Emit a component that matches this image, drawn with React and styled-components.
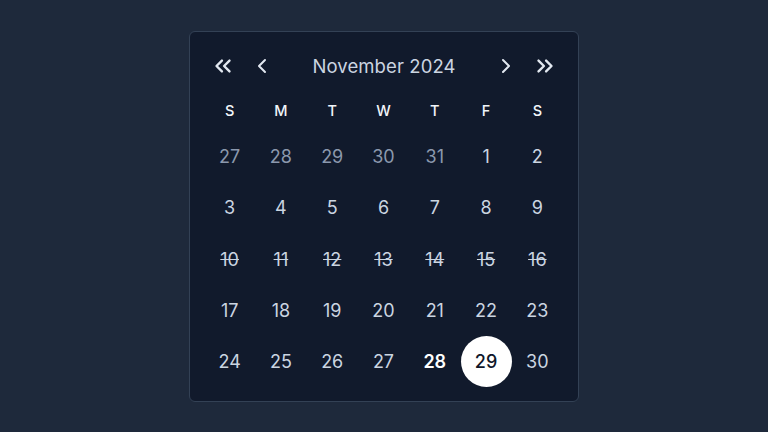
import React, { useState } from "react";
import styled, { createGlobalStyle } from "styled-components";
import { ChevronLeft, ChevronRight, ChevronsLeft, ChevronsRight } from "lucide-react";

const GlobalStyle = createGlobalStyle`
  html, body {
    margin: 0;
    padding: 0;
    background: #1e293b;
    font-family: Inter, "Liberation Sans", sans-serif;
  }
  #root {
    min-height: 100vh;
  }
`;

const WEEKDAYS = ["S", "M", "T", "W", "T", "F", "S"];

// November 2024, starts on a Friday; leading days come from October
const buildDays = () => {
  const days = [27, 28, 29, 30, 31].map((d) => ({ day: d, outside: true }));
  for (let d = 1; d <= 30; d++) {
    days.push({ day: d, disabled: d >= 10 && d <= 16, today: d === 28 });
  }
  return days;
};

const App = () => {
  const [selected, setSelected] = useState(29);
  const days = buildDays();

  return (
    <>
      <GlobalStyle />
      <Page>
        <Card>
          <Header>
            <NavGroup>
              <NavButton aria-label="Previous year">
                <ChevronsLeft size={26} strokeWidth={2.2} />
              </NavButton>
              <NavButton aria-label="Previous month">
                <ChevronLeft size={24} strokeWidth={2} />
              </NavButton>
            </NavGroup>
            <Title>November 2024</Title>
            <NavGroup>
              <NavButton aria-label="Next month">
                <ChevronRight size={24} strokeWidth={2} />
              </NavButton>
              <NavButton aria-label="Next year">
                <ChevronsRight size={26} strokeWidth={2.2} />
              </NavButton>
            </NavGroup>
          </Header>

          <Grid>
            {WEEKDAYS.map((w, i) => (
              <Weekday key={i}>{w}</Weekday>
            ))}
            {days.map((d, i) => (
              <DayCell key={i}>
                <Day
                  $outside={d.outside}
                  $disabled={d.disabled}
                  $today={d.today}
                  $selected={!d.outside && d.day === selected}
                  onClick={() => !d.outside && !d.disabled && setSelected(d.day)}
                >
                  {d.day}
                </Day>
              </DayCell>
            ))}
          </Grid>
        </Card>
      </Page>
    </>
  );
};

export default App;

const Page = styled.div`
  display: flex;
  justify-content: center;
  padding-top: 31px;
`;

const Card = styled.div`
  width: 390px;
  box-sizing: border-box;
  background: #111a2c;
  border: 1px solid #334155;
  border-radius: 6px;
  padding: 14px 15px 14px 14px;
  display: flex;
  flex-direction: column;
  gap: 4px;
`;

const Header = styled.div`
  height: 40px;
  display: flex;
  align-items: center;
  justify-content: space-between;
  padding: 0 1px 0 2px;
`;

const NavGroup = styled.div`
  display: flex;
  gap: 5px;
`;

const NavButton = styled.button`
  width: 34px;
  height: 34px;
  border: none;
  background: transparent;
  color: #e2e8f0;
  display: flex;
  align-items: center;
  justify-content: center;
  padding: 0;
  cursor: pointer;
`;

const Title = styled.div`
  font-size: 18.5px;
  color: #cbd5e1;
  font-weight: 400;
  letter-spacing: 0.1px;
`;

const Grid = styled.div`
  display: grid;
  grid-template-columns: repeat(7, minmax(0, 1fr));
`;

const Weekday = styled.div`
  height: 41px;
  display: flex;
  align-items: center;
  justify-content: center;
  font-size: 14.5px;
  font-weight: 500;
  color: #f1f5f9;
  padding-bottom: 1px;
  box-sizing: border-box;
`;

const DayCell = styled.div`
  height: 51.3px;
  display: flex;
  align-items: center;
  justify-content: center;
`;

const Day = styled.div`
  width: 51px;
  height: 51px;
  flex-shrink: 0;
  border-radius: 50%;
  display: flex;
  align-items: center;
  justify-content: center;
  font-size: 18px;
  cursor: pointer;
  color: ${(p) =>
    p.$selected ? "#0f172a" : p.$outside ? "#8b98ad" : p.$today ? "#ffffff" : "#cbd5e1"};
  background: ${(p) => (p.$selected ? "#ffffff" : "transparent")};
  font-weight: ${(p) => (p.$today ? 600 : p.$selected ? 500 : 400)};
  text-decoration: ${(p) => (p.$disabled ? "line-through" : "none")};
`;
